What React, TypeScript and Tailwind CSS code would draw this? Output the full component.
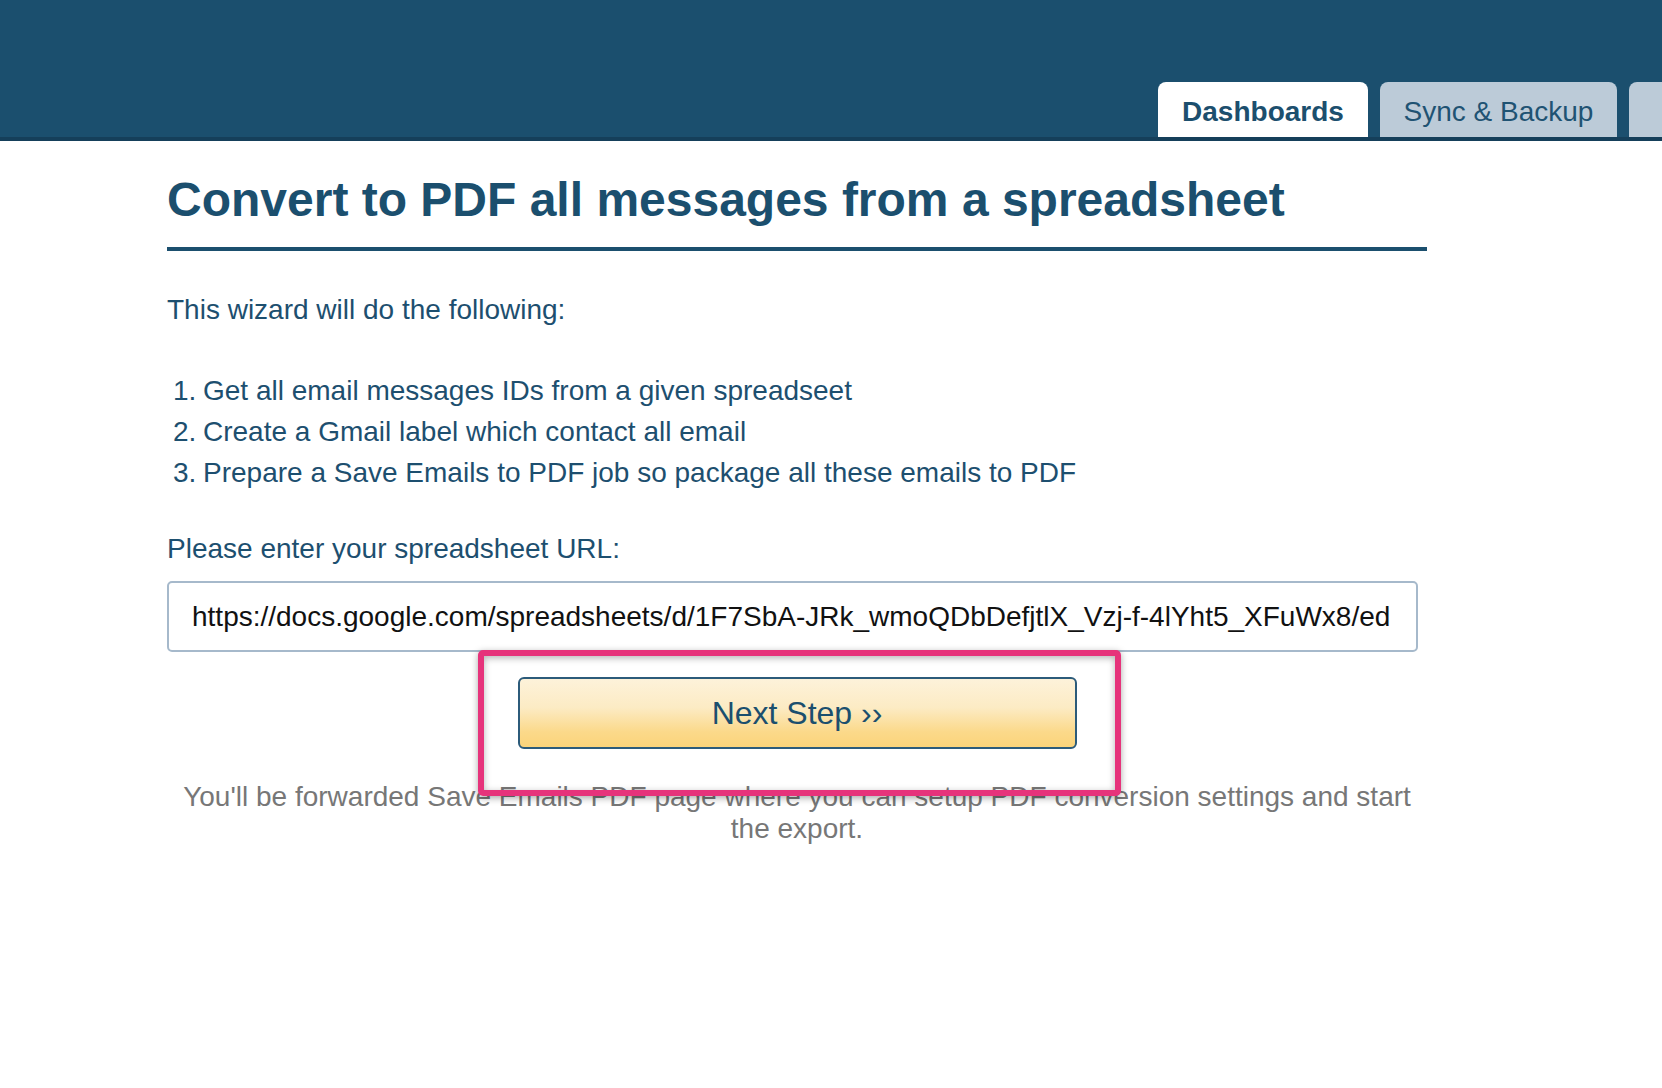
import React from 'react'

const steps = [
  'Get all email messages IDs from a given spreadseet',
  'Create a Gmail label which contact all email',
  'Prepare a Save Emails to PDF job so package all these emails to PDF',
]

function Tabs() {
  return (
    <nav className="ml-[1158px] flex shrink-0 items-end gap-3">
      <div className="-mb-[4px] h-[59px] w-[210px] rounded-t-[8px] bg-white pt-[14px] text-center text-[28px] leading-[32px] font-bold text-[#1c4f6e]">
        Dashboards
      </div>
      <div className="h-[55px] w-[237px] rounded-t-[8px] bg-[#bccbd8] pt-[14px] text-center text-[28px] leading-[32px] text-[#1f5373]">
        Sync &amp; Backup
      </div>
      <div className="h-[55px] w-[200px] rounded-t-[8px] bg-[#bccbd8]" />
    </nav>
  )
}

export default function App() {
  return (
    <div className="min-h-screen bg-white font-['Liberation_Sans',Arial,sans-serif] text-[#1d4f6f]">
      <header className="flex h-[141px] items-end overflow-hidden border-b-4 border-[#153f5a] bg-[#1b4f6e]">
        <Tabs />
      </header>

      <main className="ml-[167px] w-[1260px]">
        <h1 className="mt-[31px] border-b-4 border-[#1b4f6e] pb-[19px] text-[48px] leading-[56px] font-bold text-[#1b4f6e]">
          Convert to PDF all messages from a spreadsheet
        </h1>

        <p className="mt-[43px] text-[28px] leading-[32px]">This wizard will do the following:</p>

        <ol className="mt-[44px] text-[28px] leading-[41px]">
          {steps.map((s, i) => (
            <li key={i} className="flex">
              <span className="w-[36px] pl-[6px]">{i + 1}.</span>
              <span>{s}</span>
            </li>
          ))}
        </ol>

        <p className="mt-[40px] text-[28px] leading-[32px]">Please enter your spreadsheet URL:</p>

        <input
          readOnly
          defaultValue="https://docs.google.com/spreadsheets/d/1F7SbA-JRk_wmoQDbDefjtlX_Vzj-f-4lYht5_XFuWx8/ed"
          className="mt-[16px] block h-[71px] w-[1251px] rounded-[5px] border-2 border-[#a6b9cb] bg-white pr-[23px] pl-[23px] text-[28px] text-[#111] outline-none"
        />

        <div className="relative mx-auto mt-[25px] w-[559px]">
          <button className="block h-[72px] w-full rounded-[6px] border-2 border-[#2c5b7a] bg-[linear-gradient(to_bottom,#fdf2da_0%,#fcebc4_42%,#fbd98a_78%,#fbd47a_100%)] text-[32px] text-[#1b4f6e]">
            Next Step ››
          </button>
          {/* highlight annotation */}
          <div className="pointer-events-none absolute -top-[27px] -right-[44px] -bottom-[47px] -left-[40px] z-10 rounded-[5px] border-[6px] border-[#e6337b] shadow-[0_2px_7px_rgba(0,0,0,0.35),inset_0_2px_7px_rgba(0,0,0,0.3)]" />
        </div>

        <p className="mt-[32px] text-center text-[28px] leading-[32px] text-[#777]">
          You'll be forwarded Save Emails PDF page where you can setup PDF conversion settings and start the export.
        </p>
      </main>
    </div>
  )
}
